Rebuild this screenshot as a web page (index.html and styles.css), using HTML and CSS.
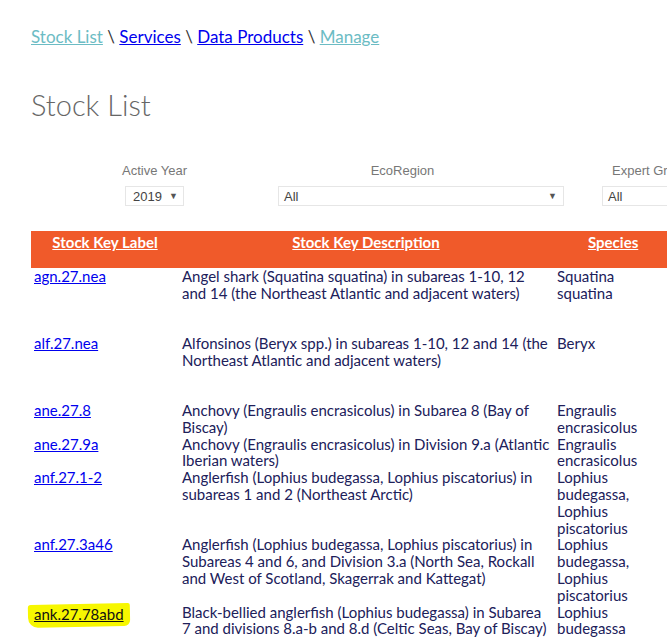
FILE: index.html
```html
<!DOCTYPE html>
<html lang="en">
<head>
<meta charset="utf-8">
<title>Stock List</title>
<link rel="stylesheet" href="styles.css">
</head>
<body>
<div class="page">
  <nav class="crumbs">
    <a class="crumb-light" href="#">Stock List</a> <span class="sep">\</span>
    <a class="crumb" href="#">Services</a> <span class="sep">\</span>
    <a class="crumb" href="#">Data Products</a> <span class="sep">\</span>
    <a class="crumb-light" href="#">Manage</a>
  </nav>

  <h1 class="title">Stock List</h1>

  <div class="filters">
    <div class="filter f-year">
      <div class="flabel">Active Year</div>
      <div class="fselect sel-year"><span>2019</span><span class="arrow">&#9660;</span></div>
    </div>
    <div class="filter f-eco">
      <div class="flabel">EcoRegion</div>
      <div class="fselect sel-eco"><span>All</span><span class="arrow">&#9660;</span></div>
    </div>
    <div class="filter f-expert">
      <div class="flabel">Expert Group</div>
      <div class="fselect sel-expert"><span>All</span><span class="arrow">&#9660;</span></div>
    </div>
  </div>

  <table class="stocks">
    <colgroup>
      <col class="c1"><col class="c2"><col class="c3">
    </colgroup>
    <thead>
      <tr>
        <th><a href="#">Stock Key Label</a></th>
        <th><a href="#">Stock Key Description</a></th>
        <th><a href="#">Species</a></th>
      </tr>
    </thead>
    <tbody>
      <tr class="tall">
        <td><a href="#">agn.27.nea</a></td>
        <td>Angel shark (Squatina squatina) in subareas 1-10, 12 and 14 (the Northeast Atlantic and adjacent waters)</td>
        <td>Squatina squatina</td>
      </tr>
      <tr class="tall">
        <td><a href="#">alf.27.nea</a></td>
        <td>Alfonsinos (Beryx spp.) in subareas 1-10, 12 and 14 (the Northeast Atlantic and adjacent waters)</td>
        <td>Beryx</td>
      </tr>
      <tr>
        <td><a href="#">ane.27.8</a></td>
        <td>Anchovy (Engraulis encrasicolus) in Subarea 8 (Bay of Biscay)</td>
        <td>Engraulis encrasicolus</td>
      </tr>
      <tr>
        <td><a href="#">ane.27.9a</a></td>
        <td>Anchovy (Engraulis encrasicolus) in Division 9.a (Atlantic Iberian waters)</td>
        <td>Engraulis encrasicolus</td>
      </tr>
      <tr>
        <td><a href="#">anf.27.1-2</a></td>
        <td>Anglerfish (Lophius budegassa, Lophius piscatorius) in subareas 1 and 2 (Northeast Arctic)</td>
        <td>Lophius budegassa, Lophius piscatorius</td>
      </tr>
      <tr>
        <td><a href="#">anf.27.3a46</a></td>
        <td>Anglerfish (Lophius budegassa, Lophius piscatorius) in Subareas 4 and 6, and Division 3.a (North Sea, Rockall and West of Scotland, Skagerrak and Kattegat)</td>
        <td>Lophius budegassa, Lophius piscatorius</td>
      </tr>
      <tr>
        <td><span class="hl"><a class="hl-link" href="#">ank.27.78abd</a></span></td>
        <td>Black-bellied anglerfish (Lophius budegassa) in Subarea 7 and divisions 8.a-b and 8.d (Celtic Seas, Bay of Biscay)</td>
        <td>Lophius budegassa</td>
      </tr>
    </tbody>
  </table>
</div>
</body>
</html>
```
FILE: styles.css
```css
html, body {
  margin: 0;
  padding: 0;
  overflow: hidden;
  background: #ffffff;
}

body {
  font-family: Lato, "Open Sans", "Liberation Sans", sans-serif;
  color: #222;
}

.page {
  padding: 26px 0 0 31px;
  width: 760px;
}

.crumbs {
  font-size: 17px;
  line-height: 22px;
  color: #333;
  white-space: nowrap;
}

.crumb-light {
  color: #6cbcc4;
  text-decoration: underline;
}

.crumb {
  color: #0000ee;
  text-decoration: underline;
}

.sep {
  color: #333;
}

.title {
  margin: 37px 0 0 0;
  font-size: 29px;
  line-height: 40px;
  font-weight: 300;
  color: #666;
}

.filters {
  display: flex;
  align-items: flex-start;
  margin-top: 38px;
  padding-left: 92px;
  font-family: "Liberation Sans", Arial, sans-serif;
  font-size: 13px;
}

.filter {
  display: flex;
  flex-direction: column;
}

.flabel {
  color: #777;
  line-height: 16px;
  white-space: nowrap;
  height: 16px;
}

.fselect {
  display: flex;
  align-items: center;
  justify-content: space-between;
  height: 18px;
  border: 1px solid #e6e6e6;
  margin-top: 7px;
  color: #444;
  padding: 0 6px;
  box-sizing: content-box;
}

.arrow {
  font-size: 9px;
  color: #555;
}

.f-year {
  width: 63px;
  align-items: center;
}

.sel-year {
  width: 45px;
  padding: 0 5px 0 7px;
}

.f-eco {
  margin-left: 92px;
  width: 287px;
}

.f-eco .flabel {
  text-align: center;
  padding-right: 38px;
}

.sel-eco {
  width: 273px;
  padding: 0 6px 0 5px;
}

.f-expert {
  margin-left: 37px;
  width: 140px;
}

.f-expert .flabel {
  padding-left: 10px;
  overflow: hidden;
}

.sel-expert {
  width: 120px;
  padding: 0 6px 0 5px;
  justify-content: flex-start;
  gap: 90px;
}

.stocks {
  margin-top: 25px;
  border-collapse: collapse;
  table-layout: fixed;
  width: 640px;
  font-size: 15px;
  line-height: 16.8px;
}

.c1 { width: 148px; }
.c2 { width: 374px; }
.c3 { width: 118px; }

.stocks thead tr {
  background: #f05a2a;
  height: 37px;
}

.stocks th {
  vertical-align: top;
  padding: 3px 3px 0 3px;
  text-align: center;
  font-weight: 700;
}

.stocks th a {
  color: #ffffff;
  text-decoration: underline;
}

.stocks th:nth-child(3) {
  padding-right: 26px;
  text-align: left;
  padding-left: 35px;
}

.stocks td {
  vertical-align: top;
  padding: 0 3px;
  color: #20205a;
}

.stocks td:nth-child(3) {
  padding: 0 26px 0 4px;
}

.stocks td a {
  color: #0000ee;
  text-decoration: underline;
}

.stocks tr.tall td {
  height: 67px;
}

.hl {
  display: inline-block;
  background: #f7f700;
  margin-left: -6px;
  padding: 2px 6px 4px 6px;
  border-radius: 3px 2px 6px 10px;
  transform: rotate(-1.2deg);
}

.stocks td a.hl-link {
  color: #111;
  display: inline-block;
  transform: rotate(1.2deg);
}
```
